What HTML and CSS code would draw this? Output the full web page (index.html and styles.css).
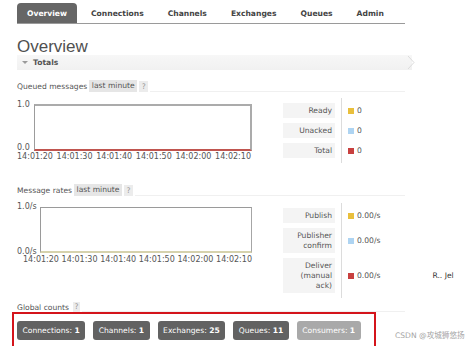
FILE: index.html
```html
<!DOCTYPE html>
<html>
<head>
<meta charset="utf-8">
<link rel="stylesheet" href="styles.css">
</head>
<body>
<div class="page">
  <nav class="tabs">
    <span class="tab active">Overview</span>
    <span class="tab">Connections</span>
    <span class="tab">Channels</span>
    <span class="tab">Exchanges</span>
    <span class="tab">Queues</span>
    <span class="tab">Admin</span>
  </nav>

  <h1 class="title">Overview</h1>

  <div class="totals">
    <span class="tri"></span><span class="totals-label">Totals</span>
    <svg class="chev" width="8" height="15" viewBox="0 0 8 15"><path d="M1 1 L7 7.5 L1 14" fill="none" stroke="#dcdcdc" stroke-width="1"/></svg>
  </div>

  <div class="sechead q-head">
    <span>Queued messages</span><span class="tag">last minute</span><span class="help">?</span><span class="rule"></span>
  </div>

  <div class="panel panel-q">
    <div class="chart chart-q">
      <div class="plotrow">
        <div class="yaxis y-q"><span>1.0</span><span>0.0</span></div>
        <div class="plot plot-q"></div>
      </div>
      <div class="xaxis x-q"><span>14:01:20</span><span>14:01:30</span><span>14:01:40</span><span>14:01:50</span><span>14:02:00</span><span>14:02:10</span></div>
    </div>
    <div class="stats">
      <div class="divider"></div>
      <div class="lbl r1">Ready</div><div class="val r1"><i class="sw yellow"></i>0</div>
      <div class="lbl r2">Unacked</div><div class="val r2"><i class="sw blue"></i>0</div>
      <div class="lbl r3">Total</div><div class="val r3"><i class="sw red"></i>0</div>
    </div>
  </div>

  <div class="sechead r-head">
    <span>Message rates</span><span class="tag">last minute</span><span class="help">?</span><span class="rule"></span>
  </div>

  <div class="panel panel-r">
    <div class="chart chart-r">
      <div class="plotrow">
        <div class="yaxis y-r"><span>1.0/s</span><span>0.0/s</span></div>
        <div class="plot plot-r"></div>
      </div>
      <div class="xaxis x-r"><span>14:01:20</span><span>14:01:30</span><span>14:01:40</span><span>14:01:50</span><span>14:02:00</span><span>14:02:10</span></div>
    </div>
    <div class="stats">
      <div class="divider"></div>
      <div class="lbl r1">Publish</div><div class="val r1"><i class="sw yellow"></i>0.00/s</div>
      <div class="lbl r2">Publisher<br>confirm</div><div class="val r2"><i class="sw blue"></i>0.00/s</div>
      <div class="lbl r3">Deliver<br>(manual<br>ack)</div><div class="val r3"><i class="sw red"></i>0.00/s<span class="stray">R.. Jel</span></div>
    </div>
  </div>

  <div class="sechead g-head">
    <span>Global counts</span><span class="help">?</span><span class="rule"></span>
  </div>

  <div class="counts">
    <span class="badge">Connections: <b>1</b></span>
    <span class="badge">Channels: <b>1</b></span>
    <span class="badge">Exchanges: <b>25</b></span>
    <span class="badge">Queues: <b>11</b></span>
    <span class="badge light">Consumers: <b>1</b></span>
  </div>

  <div class="watermark">CSDN @攻城狮悠扬</div>
</div>
</body>
</html>
```

FILE: styles.css
```css
html, body {
  margin: 0;
  padding: 0;
  background: #fff;
}
body {
  font-family: "DejaVu Sans", Verdana, sans-serif;
  font-size: 7.6px;
  color: #555;
}
.page {
  position: relative;
  height: 346px;
  overflow: hidden;
  padding: 3px 0 0 17px;
  box-sizing: border-box;
}

/* tabs */
.tabs {
  display: flex;
  gap: 4px;
  width: 388px;
  height: 20px;
  border-bottom: 1px solid #9a9a9a;
}
.tab {
  display: flex;
  align-items: center;
  padding: 0 10px;
  font-weight: bold;
  color: #444;
  border-radius: 4px 4px 0 0;
}
.tab.active {
  background: #666;
  color: #fff;
}

/* heading */
.title {
  margin: 14px 0 0 0;
  font-family: "Liberation Sans", Arial, sans-serif;
  font-weight: normal;
  font-size: 17px;
  line-height: 17px;
  color: #505050;
}

/* totals bar */
.totals {
  display: flex;
  align-items: center;
  width: 395px;
  height: 15px;
  background: linear-gradient(#f7f7f7, #f1f1f1);
  box-sizing: border-box;
  padding-left: 5px;
}
.tri {
  width: 0;
  height: 0;
  border-left: 3px solid transparent;
  border-right: 3px solid transparent;
  border-top: 3px solid #9a9a9a;
  margin-right: 5px;
}
.totals-label {
  font-weight: bold;
  color: #555;
}
.chev {
  margin-left: auto;
  margin-right: -3px;
}

/* section headings */
.sechead {
  display: flex;
  align-items: center;
  width: 388px;
  height: 12px;
  color: #555;
}
.q-head { margin-top: 10px; }
.r-head { margin-top: 21px; }
.g-head { margin-top: 4px; height: 10px; }
.tag {
  background: #e6e6e6;
  padding: 0 2.5px;
  margin-left: 2px;
  height: 12px;
  line-height: 12px;
}
.help {
  background: #ececec;
  color: #999;
  margin-left: 2px;
  width: 9px;
  height: 11px;
  line-height: 11px;
  text-align: center;
}
.g-head .help {
  margin-left: 4px;
  width: 7px;
  height: 10px;
  line-height: 10px;
}
.rule {
  flex: 1;
  align-self: flex-end;
  border-bottom: 1px solid #f0f0f0;
  margin-left: 2px;
}

/* panels */
.panel {
  display: flex;
  align-items: flex-start;
  gap: 31px;
}
.panel-q { margin-top: 6px; }
.panel-r { margin-top: 7px; }

.chart {
  width: 235px;
  font-size: 8px;
  line-height: 8px;
  color: #555;
}
.chart-q { margin-top: 3px; }
.chart-r { margin-top: 0; }
.plotrow {
  display: flex;
  align-items: flex-start;
}
.yaxis {
  display: flex;
  flex-direction: column;
  justify-content: space-between;
}
.y-q { width: 17px; height: 51px; }
.y-r { width: 23px; height: 53px; }
.plot {
  box-sizing: border-box;
  background: #fff;
}
.plot-q {
  margin-top: 3px;
  width: 218px;
  height: 47px;
  border-top: 2px solid #ababab;
  border-right: 2px solid #ababab;
  border-left: 1px solid #9c9c9c;
  border-bottom: 2px solid #c0554f;
}
.plot-r {
  margin-top: 4px;
  width: 212px;
  height: 46px;
  border-top: 1px solid #9a9a9a;
  border-right: 1px solid #a6a6a6;
  border-left: 1px solid #9a9a9a;
  border-bottom: 2px solid #d6d2ad;
}
.xaxis {
  display: flex;
  justify-content: space-between;
}
.x-q { width: 234px; margin-top: 1px; }
.x-r { width: 229px; margin-left: 6px; margin-top: 0; }

/* stats tables */
.stats {
  display: grid;
  grid-template-columns: 52px 1px auto;
  column-gap: 6px;
  row-gap: 5px;
  padding: 5px 0;
  line-height: 10px;
  color: #555;
}
.divider {
  grid-column: 2;
  grid-row: 1 / 4;
  margin: -5px 0;
  background: #dcdcdc;
}
.lbl {
  grid-column: 1;
  background: #f4f4f4;
  text-align: right;
  padding: 2.5px 3px;
}
.val {
  grid-column: 3;
  display: flex;
  align-items: center;
  color: #555;
}
.r1 { grid-row: 1; }
.r2 { grid-row: 2; }
.r3 { grid-row: 3; }
.sw {
  display: inline-block;
  width: 6px;
  height: 6px;
  margin-right: 3px;
}
.yellow { background: #e9bf3c; }
.blue { background: #aed4f2; }
.red { background: #c8403f; }
.stray {
  margin-left: 52px;
  color: #333;
}

/* global counts */
.counts {
  display: flex;
  gap: 8px;
  width: 354px;
  height: 40px;
  margin-left: -5px;
  padding: 7px 3px;
  border: 2px solid #d4141b;
  box-sizing: content-box;
}
.badge {
  height: 19px;
  line-height: 19px;
  padding: 0 5.5px;
  background: #626262;
  color: #fff;
  border-radius: 3px;
}
.badge b { font-weight: bold; }
.badge.light { background: #a9a9a9; }

.watermark {
  position: absolute;
  left: 395px;
  top: 329px;
  font-size: 7.6px;
  color: #a5a5a5;
  font-family: "DejaVu Sans", "Noto Sans CJK SC", sans-serif;
}
```
